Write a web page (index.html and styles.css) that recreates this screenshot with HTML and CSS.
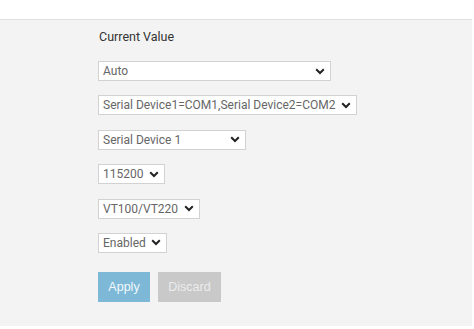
FILE: index.html
```html
<!DOCTYPE html>
<html lang="en">
<head>
    <meta charset="UTF-8">
    <title>Serial Settings</title>
    <link rel="stylesheet" href="styles.css">
</head>
<body>
    <div class="top-bar"></div>
    <div class="panel">
        <div class="form">
            <h2 class="title">Current Value</h2>
            <select class="field wide"><option>Auto</option></select>
            <select class="field"><option>Serial Device1=COM1,Serial Device2=COM2</option></select>
            <select class="field medium"><option>Serial Device 1</option></select>
            <select class="field"><option>115200</option></select>
            <select class="field"><option>VT100/VT220</option></select>
            <select class="field"><option>Enabled</option></select>
            <div class="actions">
                <button class="btn apply">Apply</button>
                <button class="btn discard">Discard</button>
            </div>
        </div>
    </div>
</body>
</html>
```

FILE: styles.css
```css
* {
    margin: 0;
    padding: 0;
    box-sizing: border-box;
}

body {
    font-family: Roboto, "Liberation Sans", sans-serif;
    background: #fff;
}

.top-bar {
    height: 19px;
    background: #fff;
}

.panel {
    width: 472px;
    height: 307px;
    background: #f3f3f3;
    border-top: 1px solid #e0e0e0;
}

.form {
    padding: 9px 0 0 98px;
    display: flex;
    flex-direction: column;
    align-items: flex-start;
}

.title {
    font-size: 12.5px;
    font-weight: 400;
    color: #333;
    line-height: 15px;
    margin-left: 1px;
    margin-bottom: 17px;
}

.field {
    appearance: none;
    -webkit-appearance: none;
    height: 20px;
    font-family: Roboto, "Liberation Sans", sans-serif;
    font-size: 12px;
    color: #666;
    background: #fff url("data:image/svg+xml;utf8,<svg xmlns='http://www.w3.org/2000/svg' width='10' height='7' viewBox='0 0 10 7'><path d='M1.2 1.3 L5 5 L8.8 1.3' fill='none' stroke='%23222' stroke-width='2'/></svg>") no-repeat right 5px center;
    border: 1px solid #d2d2d2;
    border-radius: 0;
    padding: 0 20px 0 4px;
    margin-bottom: 14.4px;
    outline: none;
}

.field.wide {
    width: 233px;
}

.field.medium {
    width: 148px;
}

.actions {
    display: flex;
    gap: 8px;
    margin-top: 5px;
}

.btn {
    height: 30px;
    border: none;
    font-family: "Liberation Sans", Arial, sans-serif;
    font-size: 12.5px;
    color: #fff;
    cursor: pointer;
}

.apply {
    width: 52px;
    background: #7db9d7;
    color: #f2f8fb;
}

.discard {
    width: 63px;
    background: #c9c9c9;
    color: #ececec;
}
```
